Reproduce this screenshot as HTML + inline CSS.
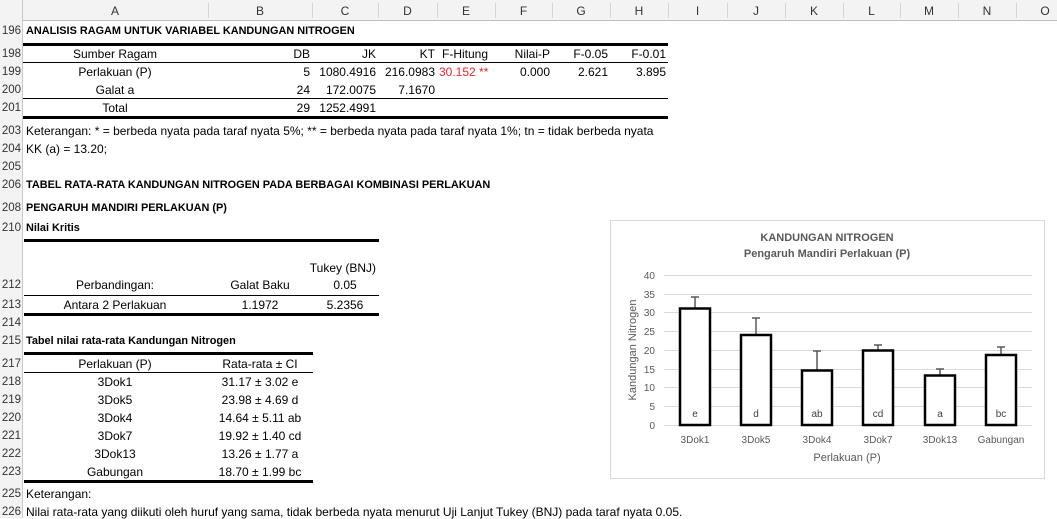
<!DOCTYPE html>
<html><head><meta charset="utf-8"><style>
*{margin:0;padding:0;box-sizing:border-box}
body{width:1057px;height:518px;overflow:hidden;background:#fff;font-family:"Liberation Sans",sans-serif;font-size:12px;color:#000;position:relative}
.t{position:absolute;white-space:nowrap;line-height:14px}
.b{font-weight:bold;font-size:10.9px}
.r{text-align:right}
.c{text-align:center}
.rn{position:absolute;left:0;width:22px;text-align:right;padding-right:1px;font-size:11.5px;color:#333;line-height:14px}
.h{position:absolute;height:0;border-top:1px solid #000}
.hk{position:absolute;height:0;border-top:3px solid #000}
.ch{position:absolute;top:4px;font-size:12px;color:#333;text-align:center}
.cs{position:absolute;top:3px;height:15px;border-left:1px solid #d4d4d4}
</style></head><body>
<div style="position:absolute;left:0;top:0;width:1057px;height:21px;background:#f3f3f3;border-bottom:1px solid #bdbdbd"></div>
<div style="position:absolute;left:0;top:0;width:23px;height:518px;background:#f3f3f3;border-right:1px solid #c8c8c8"></div>
<div class="ch" style="left:22px;width:186px">A</div>
<div class="ch" style="left:208px;width:104px">B</div>
<div class="ch" style="left:312px;width:66px">C</div>
<div class="ch" style="left:378px;width:59px">D</div>
<div class="ch" style="left:437px;width:58px">E</div>
<div class="ch" style="left:495px;width:57px">F</div>
<div class="ch" style="left:552px;width:58px">G</div>
<div class="ch" style="left:610px;width:58px">H</div>
<div class="ch" style="left:668px;width:59px">I</div>
<div class="ch" style="left:727px;width:58px">J</div>
<div class="ch" style="left:785px;width:58px">K</div>
<div class="ch" style="left:843px;width:57px">L</div>
<div class="ch" style="left:900px;width:58px">M</div>
<div class="ch" style="left:958px;width:58px">N</div>
<div class="ch" style="left:1016px;width:58px">O</div>
<div class="cs" style="left:208px"></div><div class="cs" style="left:312px"></div><div class="cs" style="left:378px"></div><div class="cs" style="left:437px"></div><div class="cs" style="left:495px"></div><div class="cs" style="left:552px"></div><div class="cs" style="left:610px"></div><div class="cs" style="left:668px"></div><div class="cs" style="left:727px"></div><div class="cs" style="left:785px"></div><div class="cs" style="left:843px"></div><div class="cs" style="left:900px"></div><div class="cs" style="left:958px"></div><div class="cs" style="left:1016px"></div>

<div class="rn" style="top:24px">196</div>
<div class="rn" style="top:47px">198</div>
<div class="rn" style="top:65px">199</div>
<div class="rn" style="top:83px">200</div>
<div class="rn" style="top:101px">201</div>
<div class="rn" style="top:124px">203</div>
<div class="rn" style="top:142px">204</div>
<div class="rn" style="top:160px">205</div>
<div class="rn" style="top:178px">206</div>
<div class="rn" style="top:201px">208</div>
<div class="rn" style="top:221px">210</div>
<div class="rn" style="top:278px">212</div>
<div class="rn" style="top:298px">213</div>
<div class="rn" style="top:316px">214</div>
<div class="rn" style="top:334px">215</div>
<div class="rn" style="top:357px">217</div>
<div class="rn" style="top:375px">218</div>
<div class="rn" style="top:393px">219</div>
<div class="rn" style="top:411px">220</div>
<div class="rn" style="top:429px">221</div>
<div class="rn" style="top:447px">222</div>
<div class="rn" style="top:465px">223</div>
<div class="rn" style="top:487px">225</div>
<div class="rn" style="top:505px">226</div>

<div class="t b" style="left:26px;top:24px">ANALISIS RAGAM UNTUK VARIABEL KANDUNGAN NITROGEN</div>
<div class="hk" style="left:23px;top:43px;width:645px"></div>
<div class="t c" style="left:22px;top:47px;width:186px">Sumber Ragam</div>
<div class="t r" style="left:208px;top:47px;width:102px">DB</div>
<div class="t r" style="left:312px;top:47px;width:64px">JK</div>
<div class="t r" style="left:378px;top:47px;width:57px">KT</div>
<div class="t" style="left:442px;top:47px">F-Hitung</div>
<div class="t r" style="left:495px;top:47px;width:55px">Nilai-P</div>
<div class="t r" style="left:552px;top:47px;width:56px">F-0.05</div>
<div class="t r" style="left:610px;top:47px;width:56px">F-0.01</div>
<div class="h" style="left:23px;top:62px;width:645px"></div>
<div class="t c" style="left:22px;top:65px;width:186px">Perlakuan (P)</div>
<div class="t r" style="left:208px;top:65px;width:102px">5</div>
<div class="t r" style="left:312px;top:65px;width:64px">1080.4916</div>
<div class="t r" style="left:378px;top:65px;width:57px">216.0983</div>
<div class="t" style="left:439px;top:65px;color:#e8262b">30.152 **</div>
<div class="t r" style="left:495px;top:65px;width:55px">0.000</div>
<div class="t r" style="left:552px;top:65px;width:56px">2.621</div>
<div class="t r" style="left:610px;top:65px;width:56px">3.895</div>
<div class="t c" style="left:22px;top:83px;width:186px">Galat a</div>
<div class="t r" style="left:208px;top:83px;width:102px">24</div>
<div class="t r" style="left:312px;top:83px;width:64px">172.0075</div>
<div class="t r" style="left:378px;top:83px;width:57px">7.1670</div>
<div class="h" style="left:23px;top:98px;width:645px"></div>
<div class="t c" style="left:22px;top:101px;width:186px">Total</div>
<div class="t r" style="left:208px;top:101px;width:102px">29</div>
<div class="t r" style="left:312px;top:101px;width:64px">1252.4991</div>
<div class="hk" style="left:23px;top:116px;width:645px"></div>

<div class="t" style="left:26px;top:124px">Keterangan: * = berbeda nyata pada taraf nyata 5%; ** = berbeda nyata pada taraf nyata 1%; tn = tidak berbeda nyata</div>
<div class="t" style="left:26px;top:142px">KK (a) = 13.20;</div>
<div class="t b" style="left:26px;top:178px">TABEL RATA-RATA KANDUNGAN NITROGEN PADA BERBAGAI KOMBINASI PERLAKUAN</div>
<div class="t b" style="left:26px;top:201px">PENGARUH MANDIRI PERLAKUAN (P)</div>
<div class="t b" style="left:26px;top:221px">Nilai Kritis</div>
<div class="hk" style="left:24px;top:239px;width:355px"></div>
<div class="t r" style="left:300px;top:261px;width:76px">Tukey (BNJ)</div>
<div class="t c" style="left:22px;top:278px;width:186px">Perbandingan:</div>
<div class="t c" style="left:208px;top:278px;width:104px">Galat Baku</div>
<div class="t c" style="left:312px;top:278px;width:66px">0.05</div>
<div class="h" style="left:24px;top:295px;width:355px"></div>
<div class="t c" style="left:22px;top:298px;width:186px">Antara 2 Perlakuan</div>
<div class="t c" style="left:208px;top:298px;width:104px">1.1972</div>
<div class="t c" style="left:312px;top:298px;width:66px">5.2356</div>
<div class="hk" style="left:24px;top:313px;width:355px"></div>

<div class="t b" style="left:26px;top:334px">Tabel nilai rata-rata Kandungan Nitrogen</div>
<div class="hk" style="left:24px;top:352px;width:289px"></div>
<div class="t c" style="left:22px;top:357px;width:186px">Perlakuan (P)</div>
<div class="t c" style="left:208px;top:357px;width:104px">Rata-rata ± CI</div>
<div class="h" style="left:24px;top:372px;width:289px"></div>
<div class="t c" style="left:22px;top:375px;width:186px">3Dok1</div><div class="t c" style="left:208px;top:375px;width:104px">31.17 ± 3.02 e</div>
<div class="t c" style="left:22px;top:393px;width:186px">3Dok5</div><div class="t c" style="left:208px;top:393px;width:104px">23.98 ± 4.69 d</div>
<div class="t c" style="left:22px;top:411px;width:186px">3Dok4</div><div class="t c" style="left:208px;top:411px;width:104px">14.64 ± 5.11 ab</div>
<div class="t c" style="left:22px;top:429px;width:186px">3Dok7</div><div class="t c" style="left:208px;top:429px;width:104px">19.92 ± 1.40 cd</div>
<div class="t c" style="left:22px;top:447px;width:186px">3Dok13</div><div class="t c" style="left:208px;top:447px;width:104px">13.26 ± 1.77 a</div>
<div class="t c" style="left:22px;top:465px;width:186px">Gabungan</div><div class="t c" style="left:208px;top:465px;width:104px">18.70 ± 1.99 bc</div>
<div class="hk" style="left:24px;top:480px;width:289px"></div>
<div class="t" style="left:26px;top:487px">Keterangan:</div>
<div class="t" style="left:26px;top:505px">Nilai rata-rata yang diikuti oleh huruf yang sama, tidak berbeda nyata menurut Uji Lanjut Tukey (BNJ) pada taraf nyata 0.05.</div>

<svg style="position:absolute;left:0;top:0" width="1057" height="518" font-family="Liberation Sans, sans-serif">
<rect x="610.5" y="220.5" width="434" height="258" fill="#fff" stroke="#d9d9d9"/>
<text x="827" y="241" text-anchor="middle" font-size="11" font-weight="bold" fill="#595959">KANDUNGAN NITROGEN</text>
<text x="827" y="257" text-anchor="middle" font-size="11" font-weight="bold" fill="#595959">Pengaruh Mandiri Perlakuan (P)</text>
<g stroke="#d9d9d9" stroke-width="1">
<line x1="664" x2="1032" y1="275.5" y2="275.5"/><line x1="664" x2="1032" y1="294.5" y2="294.5"/><line x1="664" x2="1032" y1="312.5" y2="312.5"/><line x1="664" x2="1032" y1="331.5" y2="331.5"/><line x1="664" x2="1032" y1="350.5" y2="350.5"/><line x1="664" x2="1032" y1="369.5" y2="369.5"/><line x1="664" x2="1032" y1="387.5" y2="387.5"/><line x1="664" x2="1032" y1="406.5" y2="406.5"/><line x1="664" x2="1032" y1="425.5" y2="425.5"/>
</g>
<g font-size="10" fill="#595959" text-anchor="end">
<text x="655" y="279">40</text><text x="655" y="298">35</text><text x="655" y="316">30</text><text x="655" y="335">25</text><text x="655" y="354">20</text><text x="655" y="373">15</text><text x="655" y="391">10</text><text x="655" y="410">5</text><text x="655" y="429">0</text>
</g>
<g stroke="#595959" stroke-width="1.5">
<line x1="695" x2="695" y1="308" y2="297"/><line x1="691" x2="699" y1="297" y2="297"/>
<line x1="756" x2="756" y1="335" y2="318"/><line x1="752" x2="760" y1="318" y2="318"/>
<line x1="817" x2="817" y1="370" y2="351"/><line x1="813" x2="821" y1="351" y2="351"/>
<line x1="878" x2="878" y1="350" y2="345"/><line x1="874" x2="882" y1="345" y2="345"/>
<line x1="940" x2="940" y1="375" y2="369"/><line x1="936" x2="944" y1="369" y2="369"/>
<line x1="1001" x2="1001" y1="355" y2="347"/><line x1="997" x2="1005" y1="347" y2="347"/>
</g>
<g fill="#fff" stroke="#000" stroke-width="2.5">
<rect x="680" y="308.5" width="30" height="116.5"/>
<rect x="741" y="335" width="30" height="90"/>
<rect x="802" y="370.5" width="30" height="54.5"/>
<rect x="863" y="350.5" width="30" height="74.5"/>
<rect x="925" y="375.5" width="30" height="49.5"/>
<rect x="986" y="355" width="30" height="70"/>
</g>
<g font-size="10" fill="#404040" text-anchor="middle">
<text x="695" y="417">e</text><text x="756" y="417">d</text><text x="817" y="417">ab</text><text x="878" y="417">cd</text><text x="940" y="417">a</text><text x="1001" y="417">bc</text>
</g>
<g font-size="10" fill="#595959" text-anchor="middle">
<text x="695" y="443">3Dok1</text><text x="756" y="443">3Dok5</text><text x="817" y="443">3Dok4</text><text x="878" y="443">3Dok7</text><text x="940" y="443">3Dok13</text><text x="1001" y="443">Gabungan</text>
<text x="847" y="461" font-size="11">Perlakuan (P)</text>
<text transform="translate(636,350) rotate(-90)" font-size="11">Kandungan Nitrogen</text>
</g>
</svg>
</body></html>
